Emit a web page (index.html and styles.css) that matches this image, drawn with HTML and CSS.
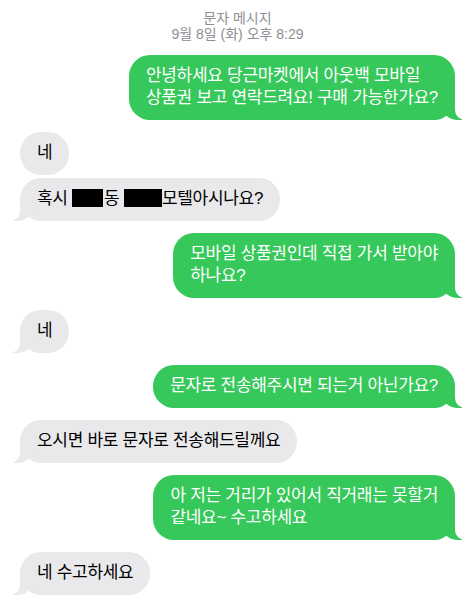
FILE: index.html
```html
<!DOCTYPE html>
<html lang="ko">
<head>
<meta charset="utf-8">
<link rel="stylesheet" href="styles.css">
</head>
<body>
<div class="chat">
  <div class="header">
    <div>문자 메시지</div>
    <div>9월 8일 (화) 오후 8:29</div>
  </div>
  <div class="msg sent tail">안녕하세요 당근마켓에서 아웃백 모바일<br>상품권 보고 연락드려요! 구매 가능한가요?</div>
  <div class="msg recv">네</div>
  <div class="msg recv tail cont">혹시 <span class="redact r1"></span>동 <span class="redact r2"></span>모텔아시나요?</div>
  <div class="msg sent tail">모바일 상품권인데 직접 가서 받아야<br>하나요?</div>
  <div class="msg recv tail">네</div>
  <div class="msg sent tail">문자로 전송해주시면 되는거 아닌가요?</div>
  <div class="msg recv tail">오시면 바로 문자로 전송해드릴께요</div>
  <div class="msg sent tail">아 저는 거리가 있어서 직거래는 못할거<br>같네요~ 수고하세요</div>
  <div class="msg recv tail">네 수고하세요</div>
</div>
</body>
</html>
```
FILE: styles.css
```css
html, body {
  margin: 0;
  padding: 0;
  background: #ffffff;
}
body {
  width: 474px;
  height: 602px;
  overflow: hidden;
  font-family: "Liberation Sans", "Noto Sans CJK KR", sans-serif;
}
.chat {
  display: flex;
  flex-direction: column;
  padding: 10px 19px 0 20px;
  gap: 12px;
}
.header {
  text-align: center;
  color: #8e8e93;
  font-size: 14px;
  line-height: 16px;
  margin-bottom: 1px;
}
.msg {
  position: relative;
  font-size: 17px;
  line-height: 22px;
  padding: 10px 17px 11px 17px;
  border-radius: 21px;
  letter-spacing: -0.3px;
}
.sent {
  align-self: flex-end;
  background: #36c85a;
  color: #ffffff;
}
.recv {
  align-self: flex-start;
  background: #e9e9eb;
  color: #000000;
}
.cont {
  margin-top: -9px;
}
.tail::before,
.tail::after {
  content: "";
  position: absolute;
  bottom: 0;
  height: 20px;
}
.sent.tail::before {
  right: -7px;
  width: 20px;
  background: #36c85a;
  border-bottom-left-radius: 16px 14px;
}
.sent.tail::after {
  right: -26px;
  width: 26px;
  background: #ffffff;
  border-bottom-left-radius: 10px;
}
.recv.tail::before {
  left: -7px;
  width: 20px;
  background: #e9e9eb;
  border-bottom-right-radius: 16px 14px;
}
.recv.tail::after {
  left: -26px;
  width: 26px;
  background: #ffffff;
  border-bottom-right-radius: 10px;
}
.redact {
  display: inline-block;
  background: #000000;
  height: 18px;
  vertical-align: -3px;
}
.r1 { width: 31px; margin-right: 1px; }
.r2 { width: 38px; }
```
